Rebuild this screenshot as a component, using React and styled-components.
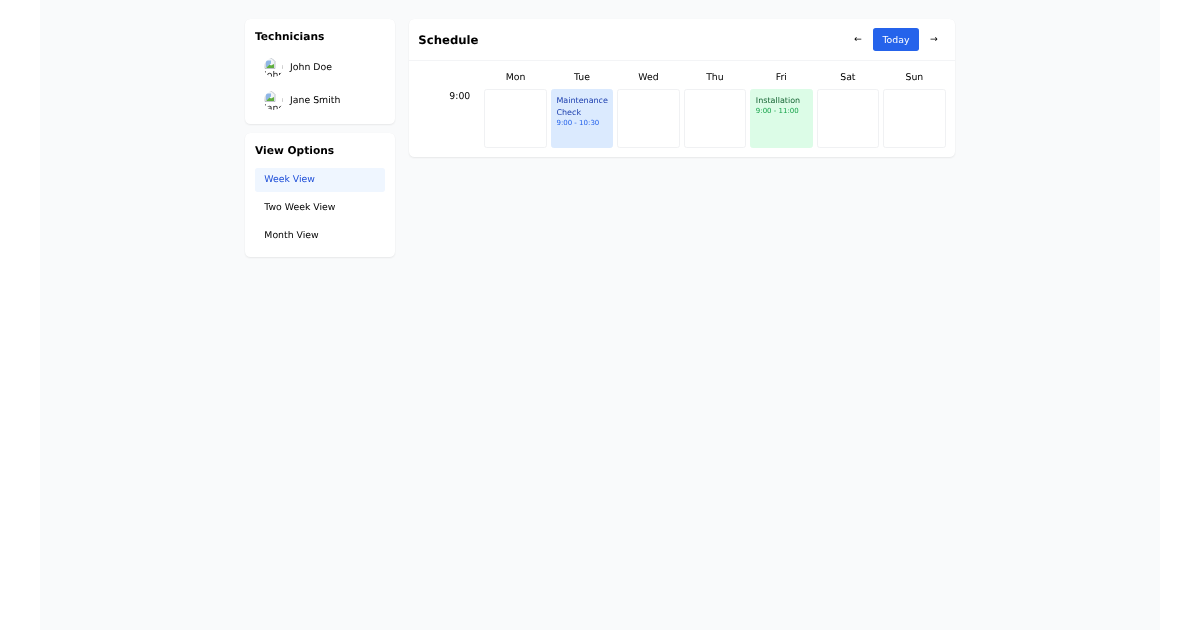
import React from 'react';
import styled, { createGlobalStyle } from 'styled-components';

const Global = createGlobalStyle`
  html, body { margin: 0; padding: 0; background: #fff; }
  body { font-family: "DejaVu Sans", sans-serif; color: #000; text-rendering: geometricPrecision; }
`;
const Page = styled.div`
  width: 1120px; height: 630px; margin: 0 auto; background: #f9fafb; overflow: hidden; will-change: transform;
  display: flex; justify-content: center; align-items: flex-start; padding-top: 19px; box-sizing: border-box; gap: 14px;
`;
const Sidebar = styled.aside`
  width: 150px; display: flex; flex-direction: column; gap: 9.5px;
`;
const Card = styled.section`
  background: #fff; border-radius: 5.33px; padding: 10px 10px 9.33px;
  box-shadow: 0 1px 2px rgba(0,0,0,.07), 0 0 1px rgba(0,0,0,.04);
  box-sizing: border-box;
`;
const SideTitle = styled.h2`
  margin: 0 0 10px; font-size: 10.67px; line-height: 15px; font-weight: 700;
`;
const TechList = styled.div`
  display: flex; flex-direction: column; gap: 5.6px;
`;
const Tech = styled.div`
  display: flex; align-items: center; gap: 7.4px; height: 27.4px; padding-left: 9px; font-size: 9.33px;
`;
const Avatar = styled.div`
  width: 18.67px; height: 18.67px; border-radius: 50%; overflow: hidden; position: relative; flex: none; font-size: 9.33px; line-height: 12px;
  svg { display: block; }
`;
const Alt = styled.span`
  display: block; white-space: nowrap; color: #222;
`;
const Tick = styled.i`
  position: absolute; right: 0; top: 7px; width: 1px; height: 4px; background: #ccc;
`;
const OptionList = styled.div`
  display: flex; flex-direction: column; gap: 4.67px;
`;
const Option = styled.div`
  height: 23.33px; display: flex; align-items: center; padding-left: 9.33px; font-size: 9.33px; border-radius: 2.67px;
  background: ${p => p.$active ? '#eff6ff' : 'transparent'}; color: ${p => p.$active ? '#1d4ed8' : '#000'};
`;
const Main = styled.main`
  width: 546px; background: #fff; border-radius: 5.33px; box-shadow: 0 1px 2px rgba(0,0,0,.07), 0 0 1px rgba(0,0,0,.04);
`;
const Header = styled.header`
  height: 42px; box-sizing: border-box; padding: 0 10px 0 9.33px; display: flex; align-items: center; justify-content: space-between; border-bottom: 1px solid #f3f4f6;
`;
const Title = styled.h1`
  margin: 0; font-size: 11.7px; font-weight: 700;
`;
const Controls = styled.div`
  display: flex; align-items: center; gap: 4px;
`;
const Arrow = styled.span`
  width: 22px; height: 23px; display: flex; align-items: center; justify-content: center; font-size: 9.33px;
`;
const Today = styled.button`
  width: 46px; height: 23px; border: 0; padding: 0; border-radius: 2.67px; background: #2563eb; color: #fff; font: 9.33px "DejaVu Sans", sans-serif;
`;
const Grid = styled.div`
  display: grid; grid-template-columns: repeat(8, 1fr); gap: 4px; padding: 9px 9.41px 9px 8.83px; grid-template-rows: 15px 59px;
`;
const DayLabel = styled.div`
  font-size: 9.33px; line-height: 15px; text-align: center; 
`;
const Time = styled.div`
  font-size: 9.33px; text-align: right; padding: 0 10px 0 0; line-height: 15px;
`;
const Cell = styled.div`
  box-sizing: border-box; border-radius: 2.67px; padding: 4.67px; overflow: hidden;
  border: 1px solid ${p => p.$bg || '#f0f1f3'};
  background: ${p => p.$bg || '#fff'};
`;
const EventName = styled.div`
  font-size: 8px; line-height: 12px; color: ${p => p.$color};
`;
const EventTime = styled.div`
  font-size: 7px; line-height: 9.5px; color: ${p => p.$color};
`;

function Broken() {
  return (
    <svg width="12" height="12" viewBox="0 0 12 12">
      <path d="M1 .5h7l3 3v7H1z" fill="#f1f4f7" stroke="#a5acb5" strokeWidth=".7" />
      <path d="M2 2.5h5v3l-2 1.5-1.5 2H2z" fill="#8fb6e6" />
      <path d="M2 10l3.5-3.5 1.5 1 3-1.5v4z" fill="#5fae3e" />
    </svg>
  );
}

const techs = ['John Doe', 'Jane Smith'];
const days = ['Mon', 'Tue', 'Wed', 'Thu', 'Fri', 'Sat', 'Sun'];
const events = {
  Tue: { name: 'Maintenance Check', time: '9:00 - 10:30', bg: '#dbeafe', c: '#1e40af', t: '#2563eb' },
  Fri: { name: 'Installation', time: '9:00 - 11:00', bg: '#dcfce7', c: '#166534', t: '#16a34a' },
};

export default function App() {
  return (
    <>
      <Global />
      <Page>
        <Sidebar>
          <Card>
            <SideTitle>Technicians</SideTitle>
            <TechList>
              {techs.map(n => (
                <Tech key={n}>
                  <Avatar><Broken /><Alt>{n}</Alt><Tick /></Avatar>
                  {n}
                </Tech>
              ))}
            </TechList>
          </Card>
          <Card>
            <SideTitle>View Options</SideTitle>
            <OptionList>
              <Option $active>Week View</Option>
              <Option>Two Week View</Option>
              <Option>Month View</Option>
            </OptionList>
          </Card>
        </Sidebar>
        <Main>
          <Header>
            <Title>Schedule</Title>
            <Controls>
              <Arrow>←</Arrow>
              <Today>Today</Today>
              <Arrow>→</Arrow>
            </Controls>
          </Header>
          <Grid>
            <div />
            {days.map(d => <DayLabel key={d}>{d}</DayLabel>)}
            <Time>9:00</Time>
            {days.map(d => {
              const e = events[d];
              return (
                <Cell key={d} $bg={e && e.bg}>
                  {e && <EventName $color={e.c}>{e.name}</EventName>}
                  {e && <EventTime $color={e.t}>{e.time}</EventTime>}
                </Cell>
              );
            })}
          </Grid>
        </Main>
      </Page>
    </>
  );
}
